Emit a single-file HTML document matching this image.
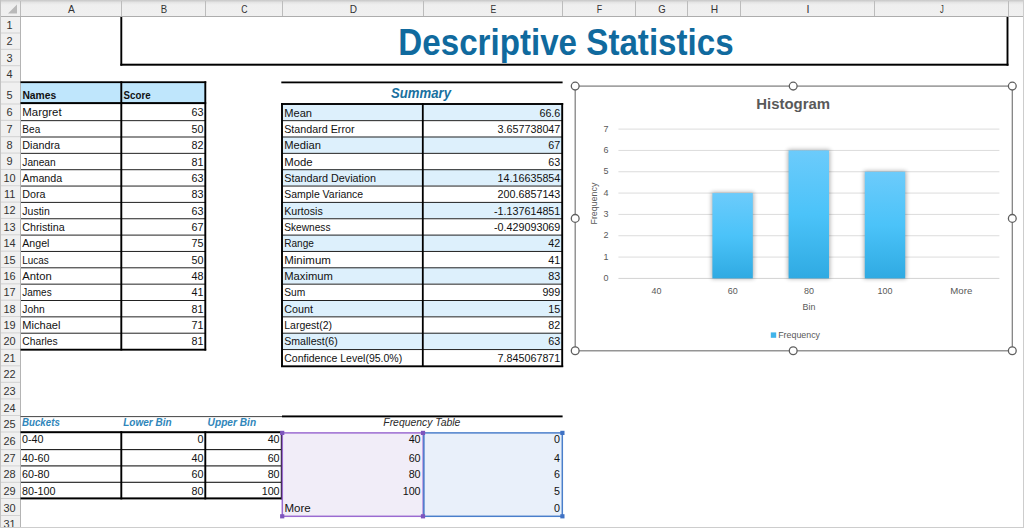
<!DOCTYPE html>
<html lang="en">
<head>
<meta charset="utf-8">
<title>Descriptive Statistics</title>
<style>
html,body{margin:0;padding:0;background:#fff;font-family:"Liberation Sans",sans-serif;}
body{width:1024px;height:528px;overflow:hidden;}
svg{display:block;}
text{white-space:pre;}
</style>
</head>
<body>
<svg width="1024" height="528" viewBox="0 0 1024 528" font-family="'Liberation Sans', sans-serif">
<defs>
<linearGradient id="hg" x1="0" y1="0" x2="0" y2="1"><stop offset="0" stop-color="#c6c6c6"/><stop offset="0.16" stop-color="#e6e6e6"/><stop offset="0.3" stop-color="#efefef"/><stop offset="1" stop-color="#f0f0f0"/></linearGradient>
<linearGradient id="bar" x1="0" y1="0" x2="0" y2="1"><stop offset="0" stop-color="#6ccbfb"/><stop offset="0.5" stop-color="#4bc3f9"/><stop offset="1" stop-color="#2faae2"/></linearGradient>
<filter id="sh" x="-20%" y="-10%" width="140%" height="120%"><feGaussianBlur stdDeviation="2"/></filter>
</defs>
<rect x="0" y="0" width="1024" height="528" fill="#ffffff"/>
<g id="column-headers">
<rect x="0" y="0" width="1024" height="16.5" fill="url(#hg)"/>
<rect x="0" y="16" width="1024" height="1" fill="#adadad"/>
<rect x="20" y="1" width="1" height="15" fill="#bcbcbc"/>
<rect x="121" y="1" width="1" height="15" fill="#bcbcbc"/>
<rect x="205" y="1" width="1" height="15" fill="#bcbcbc"/>
<rect x="282" y="1" width="1" height="15" fill="#bcbcbc"/>
<rect x="423" y="1" width="1" height="15" fill="#bcbcbc"/>
<rect x="562" y="1" width="1" height="15" fill="#bcbcbc"/>
<rect x="635" y="1" width="1" height="15" fill="#bcbcbc"/>
<rect x="687" y="1" width="1" height="15" fill="#bcbcbc"/>
<rect x="740" y="1" width="1" height="15" fill="#bcbcbc"/>
<rect x="874" y="1" width="1" height="15" fill="#bcbcbc"/>
<rect x="1008" y="1" width="1" height="15" fill="#bcbcbc"/>
<text transform="translate(71.4 12.8) scale(0.914 1)" font-size="11.2" text-anchor="middle" fill="#333">A</text>
<text transform="translate(163.9 12.8) scale(0.859 1)" font-size="11.2" text-anchor="middle" fill="#333">B</text>
<text transform="translate(244.4 12.8) scale(0.778 1)" font-size="11.2" text-anchor="middle" fill="#333">C</text>
<text transform="translate(353.4 12.8) scale(0.898 1)" font-size="11.2" text-anchor="middle" fill="#333">D</text>
<text transform="translate(493.4 12.8) scale(0.771 1)" font-size="11.2" text-anchor="middle" fill="#333">E</text>
<text transform="translate(599.4 12.8) scale(0.792 1)" font-size="11.2" text-anchor="middle" fill="#333">F</text>
<text transform="translate(661.9 12.8) scale(0.854 1)" font-size="11.2" text-anchor="middle" fill="#333">G</text>
<text transform="translate(714.4 12.8) scale(0.909 1)" font-size="11.2" text-anchor="middle" fill="#333">H</text>
<text transform="translate(807.9 12.8) scale(0.955 1)" font-size="11.2" text-anchor="middle" fill="#333">I</text>
<text transform="translate(941.9 12.8) scale(0.672 1)" font-size="11.2" text-anchor="middle" fill="#333">J</text>
<path d="M8.0 13.4 L17.0 4.6 L17.0 13.4 Z" fill="#b9b9b9"/>
</g>
<g id="row-headers">
<rect x="0" y="17" width="20.5" height="511" fill="#f0f0f0"/>
<rect x="20" y="17" width="1" height="511" fill="#b4b4b4"/>
<rect x="1" y="32.5" width="19" height="1" fill="#d2d2d2"/>
<text transform="translate(9.6 29) scale(0.951 1)" font-size="11.5" text-anchor="middle" fill="#333">1</text>
<rect x="1" y="48.8" width="19" height="1" fill="#d2d2d2"/>
<text transform="translate(9.6 45.3) scale(0.951 1)" font-size="11.5" text-anchor="middle" fill="#333">2</text>
<rect x="1" y="65.2" width="19" height="1" fill="#d2d2d2"/>
<text transform="translate(9.6 61.7) scale(0.951 1)" font-size="11.5" text-anchor="middle" fill="#333">3</text>
<rect x="1" y="81.5" width="19" height="1" fill="#d2d2d2"/>
<text transform="translate(9.6 78) scale(0.951 1)" font-size="11.5" text-anchor="middle" fill="#333">4</text>
<rect x="1" y="103.5" width="19" height="1" fill="#d2d2d2"/>
<text transform="translate(9.6 98.6) scale(0.951 1)" font-size="11.5" text-anchor="middle" fill="#333">5</text>
<rect x="1" y="119.85" width="19" height="1" fill="#d2d2d2"/>
<text transform="translate(9.6 116.35) scale(0.951 1)" font-size="11.5" text-anchor="middle" fill="#333">6</text>
<rect x="1" y="136.2" width="19" height="1" fill="#d2d2d2"/>
<text transform="translate(9.6 132.7) scale(0.951 1)" font-size="11.5" text-anchor="middle" fill="#333">7</text>
<rect x="1" y="152.55" width="19" height="1" fill="#d2d2d2"/>
<text transform="translate(9.6 149.05) scale(0.951 1)" font-size="11.5" text-anchor="middle" fill="#333">8</text>
<rect x="1" y="168.9" width="19" height="1" fill="#d2d2d2"/>
<text transform="translate(9.6 165.4) scale(0.951 1)" font-size="11.5" text-anchor="middle" fill="#333">9</text>
<rect x="1" y="185.25" width="19" height="1" fill="#d2d2d2"/>
<text transform="translate(9.6 181.75) scale(0.951 1)" font-size="11.5" text-anchor="middle" fill="#333">10</text>
<rect x="1" y="201.6" width="19" height="1" fill="#d2d2d2"/>
<text transform="translate(9.6 198.1) scale(0.951 1)" font-size="11.5" text-anchor="middle" fill="#333">11</text>
<rect x="1" y="217.95" width="19" height="1" fill="#d2d2d2"/>
<text transform="translate(9.6 214.45) scale(0.951 1)" font-size="11.5" text-anchor="middle" fill="#333">12</text>
<rect x="1" y="234.3" width="19" height="1" fill="#d2d2d2"/>
<text transform="translate(9.6 230.8) scale(0.951 1)" font-size="11.5" text-anchor="middle" fill="#333">13</text>
<rect x="1" y="250.65" width="19" height="1" fill="#d2d2d2"/>
<text transform="translate(9.6 247.15) scale(0.951 1)" font-size="11.5" text-anchor="middle" fill="#333">14</text>
<rect x="1" y="267" width="19" height="1" fill="#d2d2d2"/>
<text transform="translate(9.6 263.5) scale(0.951 1)" font-size="11.5" text-anchor="middle" fill="#333">15</text>
<rect x="1" y="283.35" width="19" height="1" fill="#d2d2d2"/>
<text transform="translate(9.6 279.85) scale(0.951 1)" font-size="11.5" text-anchor="middle" fill="#333">16</text>
<rect x="1" y="299.7" width="19" height="1" fill="#d2d2d2"/>
<text transform="translate(9.6 296.2) scale(0.951 1)" font-size="11.5" text-anchor="middle" fill="#333">17</text>
<rect x="1" y="316.05" width="19" height="1" fill="#d2d2d2"/>
<text transform="translate(9.6 312.55) scale(0.951 1)" font-size="11.5" text-anchor="middle" fill="#333">18</text>
<rect x="1" y="332.4" width="19" height="1" fill="#d2d2d2"/>
<text transform="translate(9.6 328.9) scale(0.951 1)" font-size="11.5" text-anchor="middle" fill="#333">19</text>
<rect x="1" y="348.8" width="19" height="1" fill="#d2d2d2"/>
<text transform="translate(9.6 345.3) scale(0.951 1)" font-size="11.5" text-anchor="middle" fill="#333">20</text>
<rect x="1" y="365.3" width="19" height="1" fill="#d2d2d2"/>
<text transform="translate(9.6 361.8) scale(0.951 1)" font-size="11.5" text-anchor="middle" fill="#333">21</text>
<rect x="1" y="381.8" width="19" height="1" fill="#d2d2d2"/>
<text transform="translate(9.6 378.3) scale(0.951 1)" font-size="11.5" text-anchor="middle" fill="#333">22</text>
<rect x="1" y="398.4" width="19" height="1" fill="#d2d2d2"/>
<text transform="translate(9.6 394.9) scale(0.951 1)" font-size="11.5" text-anchor="middle" fill="#333">23</text>
<rect x="1" y="415" width="19" height="1" fill="#d2d2d2"/>
<text transform="translate(9.6 411.5) scale(0.951 1)" font-size="11.5" text-anchor="middle" fill="#333">24</text>
<rect x="1" y="431.5" width="19" height="1" fill="#d2d2d2"/>
<text transform="translate(9.6 428) scale(0.951 1)" font-size="11.5" text-anchor="middle" fill="#333">25</text>
<rect x="1" y="449.1" width="19" height="1" fill="#d2d2d2"/>
<text transform="translate(9.6 445.4) scale(0.951 1)" font-size="11.5" text-anchor="middle" fill="#333">26</text>
<rect x="1" y="465.4" width="19" height="1" fill="#d2d2d2"/>
<text transform="translate(9.6 461.9) scale(0.951 1)" font-size="11.5" text-anchor="middle" fill="#333">27</text>
<rect x="1" y="481.8" width="19" height="1" fill="#d2d2d2"/>
<text transform="translate(9.6 478.3) scale(0.951 1)" font-size="11.5" text-anchor="middle" fill="#333">28</text>
<rect x="1" y="498" width="19" height="1" fill="#d2d2d2"/>
<text transform="translate(9.6 494.5) scale(0.951 1)" font-size="11.5" text-anchor="middle" fill="#333">29</text>
<rect x="1" y="515" width="19" height="1" fill="#d2d2d2"/>
<text transform="translate(9.6 511.5) scale(0.951 1)" font-size="11.5" text-anchor="middle" fill="#333">30</text>
<rect x="1" y="531.5" width="19" height="1" fill="#d2d2d2"/>
<text transform="translate(9.6 528) scale(0.951 1)" font-size="11.5" text-anchor="middle" fill="#333">31</text>
</g>
<g id="title">
<rect x="120.35" y="17" width="1.9" height="48.7" fill="#000"/>
<rect x="1006.55" y="17" width="1.9" height="48.7" fill="#000"/>
<rect x="120.35" y="63.7" width="888.1" height="2" fill="#000"/>
<text transform="translate(566 54.6) scale(0.916 1)" font-size="36.2" text-anchor="middle" font-weight="bold" fill="#106a9e">Descriptive Statistics</text>
</g>
<g id="names-table">
<rect x="21" y="82" width="184.5" height="22" fill="#bfe6fc"/>
<rect x="20.5" y="81.3" width="185.7" height="1.8" fill="#000"/>
<rect x="20.5" y="102.1" width="185.7" height="2" fill="#000"/>
<rect x="21" y="120.15" width="184" height="1" fill="#222"/>
<rect x="21" y="136.5" width="184" height="1" fill="#222"/>
<rect x="21" y="152.85" width="184" height="1" fill="#222"/>
<rect x="21" y="169.2" width="184" height="1" fill="#222"/>
<rect x="21" y="185.55" width="184" height="1" fill="#222"/>
<rect x="21" y="201.9" width="184" height="1" fill="#222"/>
<rect x="21" y="218.25" width="184" height="1" fill="#222"/>
<rect x="21" y="234.6" width="184" height="1" fill="#222"/>
<rect x="21" y="250.95" width="184" height="1" fill="#222"/>
<rect x="21" y="267.3" width="184" height="1" fill="#222"/>
<rect x="21" y="283.65" width="184" height="1" fill="#222"/>
<rect x="21" y="300" width="184" height="1" fill="#222"/>
<rect x="21" y="316.35" width="184" height="1" fill="#222"/>
<rect x="21" y="332.7" width="184" height="1" fill="#222"/>
<rect x="20.5" y="348.75" width="185.7" height="1.9" fill="#000"/>
<rect x="120.35" y="81.3" width="1.9" height="269.2" fill="#000"/>
<rect x="204.35" y="81.3" width="1.9" height="269.2" fill="#000"/>
<text transform="translate(22.4 98.5) scale(0.938 1)" font-size="11" font-weight="bold" fill="#111">Names</text>
<text transform="translate(123.6 98.5) scale(0.883 1)" font-size="11" font-weight="bold" fill="#111">Score</text>
<text transform="translate(22.3 116.45) scale(1.038 1)" font-size="11" fill="#111">Margret</text>
<text transform="translate(203.4 116.45) scale(0.978 1)" font-size="11" text-anchor="end" fill="#111">63</text>
<text transform="translate(22.3 132.8) scale(0.917 1)" font-size="11" fill="#111">Bea</text>
<text transform="translate(203.4 132.8) scale(0.978 1)" font-size="11" text-anchor="end" fill="#111">50</text>
<text transform="translate(22.3 149.15) scale(0.981 1)" font-size="11" fill="#111">Diandra</text>
<text transform="translate(203.4 149.15) scale(0.978 1)" font-size="11" text-anchor="end" fill="#111">82</text>
<text transform="translate(22.3 165.5) scale(0.924 1)" font-size="11" fill="#111">Janean</text>
<text transform="translate(203.4 165.5) scale(0.978 1)" font-size="11" text-anchor="end" fill="#111">81</text>
<text transform="translate(22.3 181.85) scale(0.975 1)" font-size="11" fill="#111">Amanda</text>
<text transform="translate(203.4 181.85) scale(0.978 1)" font-size="11" text-anchor="end" fill="#111">63</text>
<text transform="translate(22.3 198.2) scale(0.975 1)" font-size="11" fill="#111">Dora</text>
<text transform="translate(203.4 198.2) scale(0.978 1)" font-size="11" text-anchor="end" fill="#111">83</text>
<text transform="translate(22.3 214.55) scale(0.955 1)" font-size="11" fill="#111">Justin</text>
<text transform="translate(203.4 214.55) scale(0.978 1)" font-size="11" text-anchor="end" fill="#111">63</text>
<text transform="translate(22.3 230.9) scale(0.978 1)" font-size="11" fill="#111">Christina</text>
<text transform="translate(203.4 230.9) scale(0.978 1)" font-size="11" text-anchor="end" fill="#111">67</text>
<text transform="translate(22.3 247.25) scale(0.965 1)" font-size="11" fill="#111">Angel</text>
<text transform="translate(203.4 247.25) scale(0.978 1)" font-size="11" text-anchor="end" fill="#111">75</text>
<text transform="translate(22.3 263.6) scale(0.9 1)" font-size="11" fill="#111">Lucas</text>
<text transform="translate(203.4 263.6) scale(0.978 1)" font-size="11" text-anchor="end" fill="#111">50</text>
<text transform="translate(22.3 279.95) scale(1.023 1)" font-size="11" fill="#111">Anton</text>
<text transform="translate(203.4 279.95) scale(0.978 1)" font-size="11" text-anchor="end" fill="#111">48</text>
<text transform="translate(22.3 296.3) scale(0.905 1)" font-size="11" fill="#111">James</text>
<text transform="translate(203.4 296.3) scale(0.978 1)" font-size="11" text-anchor="end" fill="#111">41</text>
<text transform="translate(22.3 312.65) scale(0.938 1)" font-size="11" fill="#111">John</text>
<text transform="translate(203.4 312.65) scale(0.978 1)" font-size="11" text-anchor="end" fill="#111">81</text>
<text transform="translate(22.3 329) scale(1.008 1)" font-size="11" fill="#111">Michael</text>
<text transform="translate(203.4 329) scale(0.978 1)" font-size="11" text-anchor="end" fill="#111">71</text>
<text transform="translate(22.3 345.35) scale(0.935 1)" font-size="11" fill="#111">Charles</text>
<text transform="translate(203.4 345.35) scale(0.978 1)" font-size="11" text-anchor="end" fill="#111">81</text>
</g>
<g id="summary-table">
<rect x="281.3" y="81.5" width="281.3" height="1.8" fill="#000"/>
<text transform="translate(421 98.3) scale(0.941 1)" font-size="14" text-anchor="middle" font-weight="bold" font-style="italic" fill="#19709f">Summary</text>
<rect x="282" y="104" width="280" height="16.35" fill="#ddf0fc"/>
<rect x="282" y="136.7" width="280" height="16.35" fill="#ddf0fc"/>
<rect x="282" y="169.4" width="280" height="16.35" fill="#ddf0fc"/>
<rect x="282" y="202.1" width="280" height="16.35" fill="#ddf0fc"/>
<rect x="282" y="234.8" width="280" height="16.35" fill="#ddf0fc"/>
<rect x="282" y="267.5" width="280" height="16.35" fill="#ddf0fc"/>
<rect x="282" y="300.2" width="280" height="16.35" fill="#ddf0fc"/>
<rect x="282" y="332.9" width="280" height="16.35" fill="#ddf0fc"/>
<rect x="282" y="120.15" width="280" height="1" fill="#222"/>
<rect x="282" y="136.5" width="280" height="1" fill="#222"/>
<rect x="282" y="152.85" width="280" height="1" fill="#222"/>
<rect x="282" y="169.2" width="280" height="1" fill="#222"/>
<rect x="282" y="185.55" width="280" height="1" fill="#222"/>
<rect x="282" y="201.9" width="280" height="1" fill="#222"/>
<rect x="282" y="218.25" width="280" height="1" fill="#222"/>
<rect x="282" y="234.6" width="280" height="1" fill="#222"/>
<rect x="282" y="250.95" width="280" height="1" fill="#222"/>
<rect x="282" y="267.3" width="280" height="1" fill="#222"/>
<rect x="282" y="283.65" width="280" height="1" fill="#222"/>
<rect x="282" y="300" width="280" height="1" fill="#222"/>
<rect x="282" y="316.35" width="280" height="1" fill="#222"/>
<rect x="282" y="332.7" width="280" height="1" fill="#222"/>
<rect x="282" y="349.05" width="280" height="1" fill="#222"/>
<rect x="281" y="103.05" width="282.2" height="1.9" fill="#000"/>
<rect x="281" y="365.35" width="282.2" height="1.9" fill="#000"/>
<rect x="281.05" y="103" width="1.9" height="264" fill="#000"/>
<rect x="421.9" y="103" width="1.8" height="264" fill="#000"/>
<rect x="561.25" y="103" width="1.9" height="264" fill="#000"/>
<text transform="translate(284.2 116.55) scale(1.011 1)" font-size="11" fill="#111">Mean</text>
<text transform="translate(560.3 116.55) scale(0.977 1)" font-size="11" text-anchor="end" fill="#111">66.6</text>
<text transform="translate(284.2 132.9) scale(0.976 1)" font-size="11" fill="#111">Standard Error</text>
<text transform="translate(560.3 132.9) scale(0.977 1)" font-size="11" text-anchor="end" fill="#111">3.657738047</text>
<text transform="translate(284.2 149.25) scale(1.018 1)" font-size="11" fill="#111">Median</text>
<text transform="translate(560.3 149.25) scale(0.978 1)" font-size="11" text-anchor="end" fill="#111">67</text>
<text transform="translate(284.2 165.6) scale(1.031 1)" font-size="11" fill="#111">Mode</text>
<text transform="translate(560.3 165.6) scale(0.978 1)" font-size="11" text-anchor="end" fill="#111">63</text>
<text transform="translate(284.2 181.95) scale(0.983 1)" font-size="11" fill="#111">Standard Deviation</text>
<text transform="translate(560.3 181.95) scale(0.977 1)" font-size="11" text-anchor="end" fill="#111">14.16635854</text>
<text transform="translate(284.2 198.3) scale(0.953 1)" font-size="11" fill="#111">Sample Variance</text>
<text transform="translate(560.3 198.3) scale(0.977 1)" font-size="11" text-anchor="end" fill="#111">200.6857143</text>
<text transform="translate(284.2 214.65) scale(0.97 1)" font-size="11" fill="#111">Kurtosis</text>
<text transform="translate(560.3 214.65) scale(0.978 1)" font-size="11" text-anchor="end" fill="#111">-1.137614851</text>
<text transform="translate(284.2 231) scale(0.925 1)" font-size="11" fill="#111">Skewness</text>
<text transform="translate(560.3 231) scale(0.978 1)" font-size="11" text-anchor="end" fill="#111">-0.429093069</text>
<text transform="translate(284.2 247.35) scale(0.916 1)" font-size="11" fill="#111">Range</text>
<text transform="translate(560.3 247.35) scale(0.978 1)" font-size="11" text-anchor="end" fill="#111">42</text>
<text transform="translate(284.2 263.7) scale(1.048 1)" font-size="11" fill="#111">Minimum</text>
<text transform="translate(560.3 263.7) scale(0.978 1)" font-size="11" text-anchor="end" fill="#111">41</text>
<text transform="translate(284.2 280.05) scale(1.02 1)" font-size="11" fill="#111">Maximum</text>
<text transform="translate(560.3 280.05) scale(0.978 1)" font-size="11" text-anchor="end" fill="#111">83</text>
<text transform="translate(284.2 296.4) scale(0.931 1)" font-size="11" fill="#111">Sum</text>
<text transform="translate(560.3 296.4) scale(0.978 1)" font-size="11" text-anchor="end" fill="#111">999</text>
<text transform="translate(284.2 312.75) scale(0.983 1)" font-size="11" fill="#111">Count</text>
<text transform="translate(560.3 312.75) scale(0.978 1)" font-size="11" text-anchor="end" fill="#111">15</text>
<text transform="translate(284.2 329.1) scale(0.955 1)" font-size="11" fill="#111">Largest(2)</text>
<text transform="translate(560.3 329.1) scale(0.978 1)" font-size="11" text-anchor="end" fill="#111">82</text>
<text transform="translate(284.2 345.45) scale(0.962 1)" font-size="11" fill="#111">Smallest(6)</text>
<text transform="translate(560.3 345.45) scale(0.978 1)" font-size="11" text-anchor="end" fill="#111">63</text>
<text transform="translate(284.2 361.8) scale(0.956 1)" font-size="11" fill="#111">Confidence Level(95.0%)</text>
<text transform="translate(560.3 361.8) scale(0.977 1)" font-size="11" text-anchor="end" fill="#111">7.845067871</text>
</g>
<g id="buckets-table">
<rect x="20.5" y="416.1" width="261.5" height="1" fill="#444"/>
<text transform="translate(22 425.7) scale(0.885 1)" font-size="11" font-weight="bold" font-style="italic" fill="#2f86ba">Buckets</text>
<text transform="translate(123.2 425.7) scale(0.91 1)" font-size="11" font-weight="bold" font-style="italic" fill="#2f86ba">Lower Bin</text>
<text transform="translate(207.6 425.7) scale(0.923 1)" font-size="11" font-weight="bold" font-style="italic" fill="#2f86ba">Upper Bin</text>
<rect x="20.5" y="431.2" width="261.5" height="2" fill="#000"/>
<rect x="21" y="449.05" width="261" height="1.1" fill="#1a1a1a"/>
<rect x="21" y="465.35" width="261" height="1.1" fill="#1a1a1a"/>
<rect x="21" y="481.75" width="261" height="1.1" fill="#1a1a1a"/>
<rect x="20.5" y="497.4" width="261.5" height="2" fill="#000"/>
<rect x="120.35" y="431.2" width="1.9" height="68.2" fill="#000"/>
<rect x="204.35" y="431.2" width="1.9" height="68.2" fill="#000"/>
<rect x="280.8" y="431.2" width="1.2" height="68.2" fill="#000"/>
<text transform="translate(22 443.4) scale(0.979 1)" font-size="11" fill="#111">0-40</text>
<text transform="translate(203.4 443.4) scale(0.978 1)" font-size="11" text-anchor="end" fill="#111">0</text>
<text transform="translate(279.6 443.4) scale(0.978 1)" font-size="11" text-anchor="end" fill="#111">40</text>
<text transform="translate(22 461.9) scale(0.979 1)" font-size="11" fill="#111">40-60</text>
<text transform="translate(203.4 461.9) scale(0.978 1)" font-size="11" text-anchor="end" fill="#111">40</text>
<text transform="translate(279.6 461.9) scale(0.978 1)" font-size="11" text-anchor="end" fill="#111">60</text>
<text transform="translate(22 478.3) scale(0.979 1)" font-size="11" fill="#111">60-80</text>
<text transform="translate(203.4 478.3) scale(0.978 1)" font-size="11" text-anchor="end" fill="#111">60</text>
<text transform="translate(279.6 478.3) scale(0.978 1)" font-size="11" text-anchor="end" fill="#111">80</text>
<text transform="translate(22 494.7) scale(0.979 1)" font-size="11" fill="#111">80-100</text>
<text transform="translate(203.4 494.7) scale(0.978 1)" font-size="11" text-anchor="end" fill="#111">80</text>
<text transform="translate(279.6 494.7) scale(0.978 1)" font-size="11" text-anchor="end" fill="#111">100</text>
</g>
<g id="frequency-table">
<rect x="282" y="415.45" width="280.6" height="1.9" fill="#000"/>
<text transform="translate(421.8 425.7) scale(0.945 1)" font-size="11" text-anchor="middle" font-style="italic" fill="#2a2a2a">Frequency Table</text>
<rect x="282.6" y="433.4" width="140.4" height="82.4" fill="#f1edf8"/>
<rect x="423.6" y="433.4" width="138.4" height="82.4" fill="#e9f0fa"/>
<rect x="282.3" y="432.9" width="140.9" height="83.4" fill="none" stroke="#9b6bd1" stroke-width="1.5"/>
<rect x="423.9" y="432.9" width="138.4" height="83.4" fill="none" stroke="#4a7fcb" stroke-width="1.5"/>
<rect x="280.1" y="430.8" width="4.2" height="4.2" fill="#7d55bd"/>
<rect x="420.9" y="430.8" width="4.2" height="4.2" fill="#7d55bd"/>
<rect x="280.1" y="514.2" width="4.2" height="4.2" fill="#7d55bd"/>
<rect x="420.9" y="514.2" width="4.2" height="4.2" fill="#7d55bd"/>
<rect x="560.3" y="430.8" width="4.2" height="4.2" fill="#3f72c4"/>
<rect x="560.3" y="514.2" width="4.2" height="4.2" fill="#3f72c4"/>
<text transform="translate(420.6 443.3) scale(0.978 1)" font-size="11" text-anchor="end" fill="#111">40</text>
<text transform="translate(560 443.3) scale(0.978 1)" font-size="11" text-anchor="end" fill="#111">0</text>
<text transform="translate(420.6 462) scale(0.978 1)" font-size="11" text-anchor="end" fill="#111">60</text>
<text transform="translate(560 462) scale(0.978 1)" font-size="11" text-anchor="end" fill="#111">4</text>
<text transform="translate(420.6 478.3) scale(0.978 1)" font-size="11" text-anchor="end" fill="#111">80</text>
<text transform="translate(560 478.3) scale(0.978 1)" font-size="11" text-anchor="end" fill="#111">6</text>
<text transform="translate(420.6 494.8) scale(0.978 1)" font-size="11" text-anchor="end" fill="#111">100</text>
<text transform="translate(560 494.8) scale(0.978 1)" font-size="11" text-anchor="end" fill="#111">5</text>
<text transform="translate(560 511.6) scale(0.978 1)" font-size="11" text-anchor="end" fill="#111">0</text>
<text transform="translate(284.4 511.6) scale(1.049 1)" font-size="11" fill="#111">More</text>
</g>
<g id="chart">
<rect x="575.2" y="86.1" width="437.1" height="264.7" fill="#ffffff" stroke="#7f7f7f" stroke-width="1.25"/>
<text transform="translate(793.2 109.4) scale(0.97 1)" font-size="15.4" text-anchor="middle" font-weight="bold" fill="#595959">Histogram</text>
<rect x="618.4" y="277.9" width="381" height="1" fill="#d2d2d2"/>
<text transform="translate(608.6 280.9) scale(0.945 1)" font-size="9.5" text-anchor="end" fill="#595959">0</text>
<rect x="618.4" y="256.57" width="381" height="1" fill="#dcdcdc"/>
<text transform="translate(608.6 259.57) scale(0.945 1)" font-size="9.5" text-anchor="end" fill="#595959">1</text>
<rect x="618.4" y="235.24" width="381" height="1" fill="#dcdcdc"/>
<text transform="translate(608.6 238.24) scale(0.945 1)" font-size="9.5" text-anchor="end" fill="#595959">2</text>
<rect x="618.4" y="213.91" width="381" height="1" fill="#dcdcdc"/>
<text transform="translate(608.6 216.91) scale(0.945 1)" font-size="9.5" text-anchor="end" fill="#595959">3</text>
<rect x="618.4" y="192.58" width="381" height="1" fill="#dcdcdc"/>
<text transform="translate(608.6 195.58) scale(0.945 1)" font-size="9.5" text-anchor="end" fill="#595959">4</text>
<rect x="618.4" y="171.25" width="381" height="1" fill="#dcdcdc"/>
<text transform="translate(608.6 174.25) scale(0.945 1)" font-size="9.5" text-anchor="end" fill="#595959">5</text>
<rect x="618.4" y="149.92" width="381" height="1" fill="#dcdcdc"/>
<text transform="translate(608.6 152.92) scale(0.945 1)" font-size="9.5" text-anchor="end" fill="#595959">6</text>
<rect x="618.4" y="128.59" width="381" height="1" fill="#dcdcdc"/>
<text transform="translate(608.6 131.59) scale(0.945 1)" font-size="9.5" text-anchor="end" fill="#595959">7</text>
<text transform="translate(656.5 294) scale(0.976 1)" font-size="9.2" text-anchor="middle" fill="#595959">40</text>
<rect x="711.5" y="192.28" width="42.4" height="86.52" fill="#000" opacity="0.3" filter="url(#sh)"/>
<rect x="712.4" y="193.08" width="40.4" height="85.32" fill="url(#bar)"/>
<text transform="translate(732.7 294) scale(0.976 1)" font-size="9.2" text-anchor="middle" fill="#595959">60</text>
<rect x="787.7" y="149.62" width="42.4" height="129.18" fill="#000" opacity="0.3" filter="url(#sh)"/>
<rect x="788.6" y="150.42" width="40.4" height="127.98" fill="url(#bar)"/>
<text transform="translate(808.9 294) scale(0.976 1)" font-size="9.2" text-anchor="middle" fill="#595959">80</text>
<rect x="863.9" y="170.95" width="42.4" height="107.85" fill="#000" opacity="0.3" filter="url(#sh)"/>
<rect x="864.8" y="171.75" width="40.4" height="106.65" fill="url(#bar)"/>
<text transform="translate(885.1 294) scale(0.976 1)" font-size="9.2" text-anchor="middle" fill="#595959">100</text>
<text transform="translate(961.3 294) scale(1.047 1)" font-size="9.2" text-anchor="middle" fill="#595959">More</text>
<text transform="translate(809 309.9) scale(0.962 1)" font-size="9.2" text-anchor="middle" fill="#595959">Bin</text>
<text transform="translate(597.2 203.6) rotate(-90) scale(0.964 1)" font-size="9.2" text-anchor="middle" fill="#595959">Frequency</text>
<rect x="770.8" y="332.4" width="5.4" height="5.4" fill="#41b4ea"/>
<text transform="translate(778.2 338.2) scale(0.964 1)" font-size="9.2" fill="#595959">Frequency</text>
<circle cx="575.2" cy="86.1" r="3.9" fill="#ffffff" stroke="#5f5f5f" stroke-width="1.3"/>
<circle cx="793.2" cy="86.1" r="3.9" fill="#ffffff" stroke="#5f5f5f" stroke-width="1.3"/>
<circle cx="1012.3" cy="86.1" r="3.9" fill="#ffffff" stroke="#5f5f5f" stroke-width="1.3"/>
<circle cx="575.2" cy="218.4" r="3.9" fill="#ffffff" stroke="#5f5f5f" stroke-width="1.3"/>
<circle cx="1012.3" cy="218.4" r="3.9" fill="#ffffff" stroke="#5f5f5f" stroke-width="1.3"/>
<circle cx="575.2" cy="350.8" r="3.9" fill="#ffffff" stroke="#5f5f5f" stroke-width="1.3"/>
<circle cx="793.2" cy="350.8" r="3.9" fill="#ffffff" stroke="#5f5f5f" stroke-width="1.3"/>
<circle cx="1012.3" cy="350.8" r="3.9" fill="#ffffff" stroke="#5f5f5f" stroke-width="1.3"/>
</g>
<rect x="0" y="0" width="1" height="528" fill="#c2c2c2"/>
<rect x="1023" y="0" width="1" height="528" fill="#cdcdcd"/>
<rect x="0" y="527" width="1024" height="1" fill="#cdcdcd"/>
</svg>
</body>
</html>
